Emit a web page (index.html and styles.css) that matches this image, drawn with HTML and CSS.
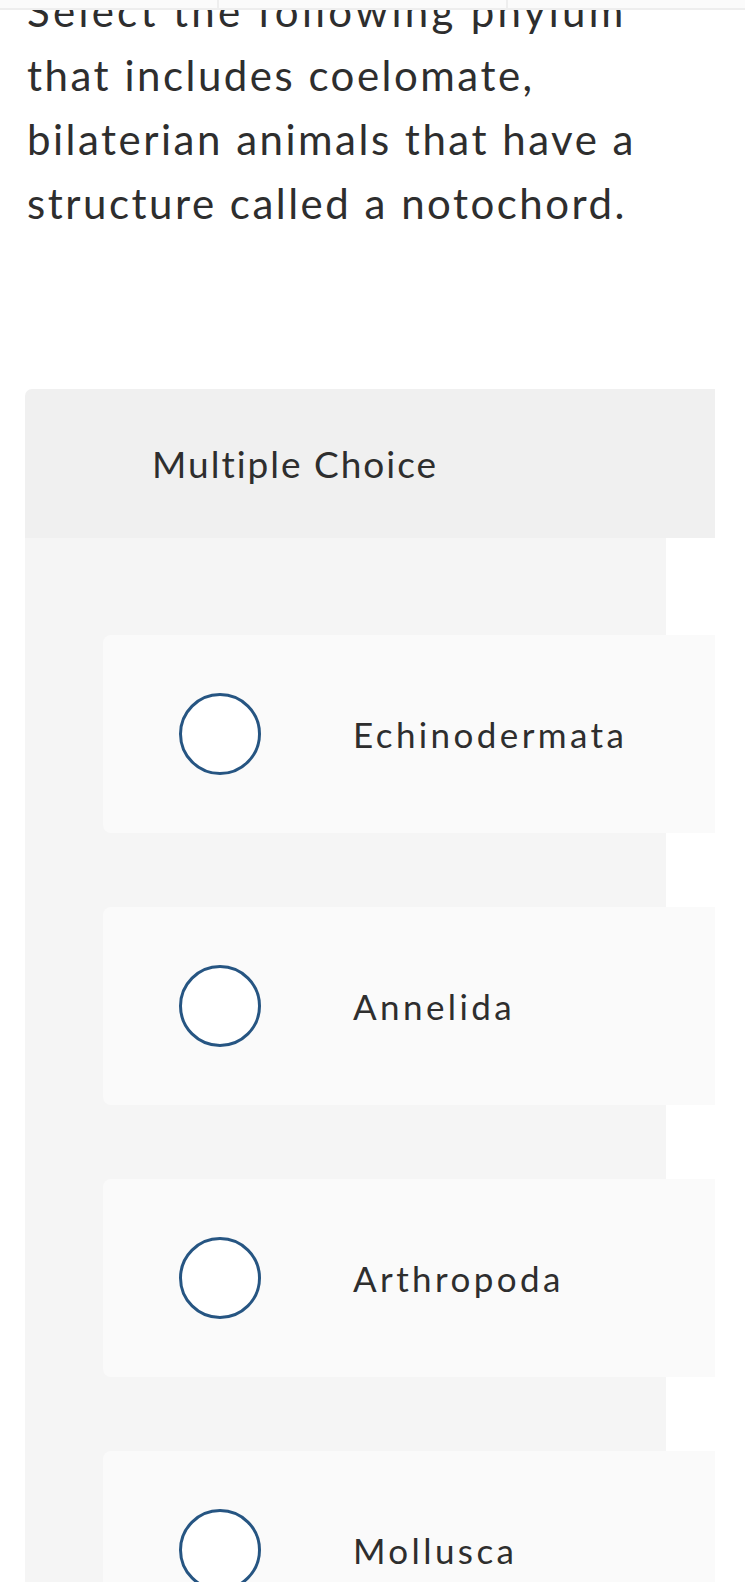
FILE: index.html
```html
<!DOCTYPE html>
<html>
<head>
<meta charset="utf-8">
<link rel="stylesheet" href="styles.css">
</head>
<body>
<div class="topbar">
  <div class="tab"></div>
  <div class="tab"></div>
  <div class="tab"></div>
</div>
<p class="question"><span class="first-line">Select the following phylum</span><br>that includes coelomate,<br>bilaterian animals that have a<br>structure called a notochord.</p>
<div class="mc">
  <div class="mc-head">Multiple Choice</div>
  <div class="mc-body">
    <div class="option"><span class="radio"></span><span class="label">Echinodermata</span></div>
    <div class="option"><span class="radio"></span><span class="label">Annelida</span></div>
    <div class="option"><span class="radio"></span><span class="label">Arthropoda</span></div>
    <div class="option"><span class="radio"></span><span class="label">Mollusca</span></div>
  </div>
</div>
</body>
</html>
```

FILE: styles.css
```css
html, body {
  margin: 0;
  padding: 0;
  background: #ffffff;
  overflow: hidden;
}
body {
  font-family: Lato, "Open Sans", sans-serif;
  font-weight: 400;
  color: #2e2e2e;
  height: 1582px;
}
.topbar {
  position: absolute;
  top: 0;
  left: 0;
  right: 0;
  height: 8px;
  display: flex;
  background: #fbfbfb;
  border-bottom: 2px solid #eeeeee;
  z-index: 2;
}
.tab {
  border-right: 2px solid #eeeeee;
}
.tab:nth-child(1) { width: 217px; }
.tab:nth-child(2) { width: 287px; }
.tab:nth-child(3) { flex: 1; border-right: none; }
.question {
  margin: -21px 0 0 0;
  padding-left: 27px;
  font-size: 42px;
  line-height: 64px;
  letter-spacing: 2.5px;
}
.first-line {
  letter-spacing: 3.3px;
}
.mc {
  margin: 154px 0 0 25px;
  width: 690px;
}
.mc-head {
  height: 149px;
  background: #f0f0f0;
  border-top-left-radius: 7px;
  display: flex;
  align-items: center;
  padding-left: 127px;
  font-size: 37px;
  letter-spacing: 2px;
}
.mc-body {
  width: 641px;
  background: #f5f5f5;
  padding: 97px 0 0 78px;
  box-sizing: border-box;
  display: flex;
  flex-direction: column;
  gap: 74px;
  height: 1200px;
}
.option {
  flex: none;
  width: 612px;
  height: 198px;
  background: #fafafa;
  border-radius: 8px 0 0 8px;
  display: flex;
  align-items: center;
  padding-left: 76px;
  box-sizing: border-box;
}
.radio {
  width: 82px;
  height: 82px;
  box-sizing: border-box;
  border: 3px solid #265582;
  border-radius: 50%;
  background: #ffffff;
  flex: none;
}
.label {
  margin-left: 92px;
  font-size: 35px;
  letter-spacing: 3.4px;
}
```
